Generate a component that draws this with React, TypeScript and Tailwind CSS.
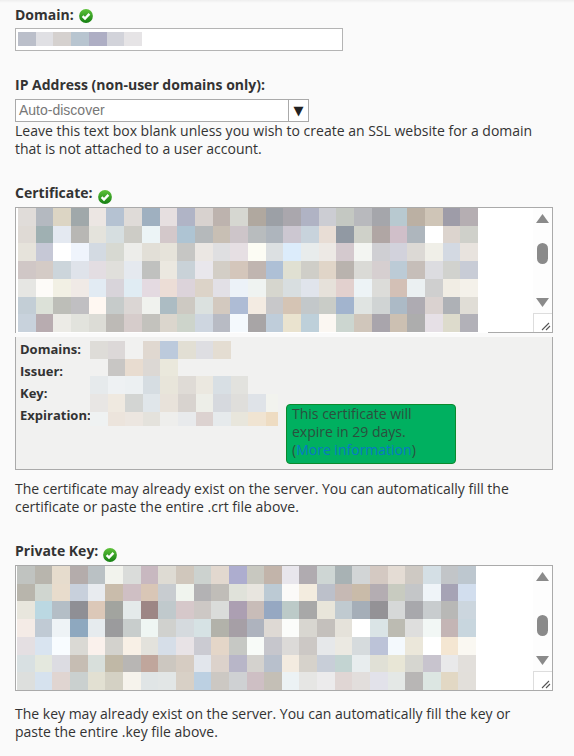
import React from 'react';

const domainCells = 'bbbfca e0e0e4 d5d1cf b8c5d0 aeaec4 d2d3da e6e4e6';

const certCells = `e0dcd9 b4b9c0 dcd5c4 a0a8aa ece6e3 b5c2d2 dfdbd8 9fb0c0 e6dfe0 b0b4c6 d8d2cf bdb3ae d6d7d1 b0a89f 9ca0a6 aaa7ad b0b3c4 cccdd3 c4c8c2 b8b9bd a5a6ab b8c9d0 bbb0a3 cfc5b7 9e9ca8 b5aeb2
dfdad5 9fb0b2 e4e9f1 b8b7b4 e4e3dc d6dee0 cdccc6 ecf4f6 d3c8ca aec4d3 b5b9bb c8bfb4 cdc5c9 b8bcbe aeb5bd ccc7d1 c8d3dc e8ddd5 9199a3 cfd1c9 b0a6a4 d0bfc9 aeb6bd ffffff dcd4ce cfd0ca
e6e3db c6c8d6 ffffff eff4fc d3dae2 d7d9d2 ededea e2dfd7 e6e3da c6c6c4 ebe7e3 dfdfe1 e6dfe3 fcfcf4 dce0e2 dcecfb e8ecec ede9e5 d4c9ce f3f5f2 cfcfd3 d2d2dc dcd9d5 f0efe8 d3d9e2 e8e3de
d0c7c6 d4cbc6 ccd5db dfe3ea e3dde2 e0dfdb e5e9ef c0c1bf ebe8e0 c9d2d8 e9e7ec d3cec6 d4c6bb c0b5b0 aec0d6 e0e0d2 cfcec8 e0d5c8 b9b3ae dadad6 d6cfd0 bccbd6 c6beb9 dcdce0 d1d2ce c8ccd6
e6e6e3 fdfbf8 f2f0e4 f0eae6 e2ebf3 d8d4da e0ecf3 e4dae1 ecddd6 dcd3da dcd3c8 e2e0e6 ecf2f8 eff3f1 d6d6ce d8dee0 e0e4ec e6e1da e2d0ce edf3f6 dcdcd9 d3c0b6 ebf0f2 cfcfcf f1ede4 f4f1ea
c3ced6 dce1d8 bdbeb8 c0bfc2 fff8f2 c6cbca dbd6d4 f0f2ee acbcc3 cdc9c2 dbe1df d3c9bf aebcd5 f3ebe2 c8c8ca d5c4b4 c3c8ca c9ccc7 a2b4ce e0e4e2 d0d4d4 acbac6 aeabb2 dad2d0 aeb1b6 e0ddd6
c8d2dc b8acb0 ecebe6 e2e3dd dcdcd6 bdbab6 d6cccb c3c2bd dbd6cd cdd4cb ced6e0 b8bbc4 f4f9fd a8a5a6 bfcdda eae3cf bed0da fbf7f2 ccd6d0 d0c6bb a9a5ac ccc0b2 adadad e6e0e6 dddbcc b2b1b8`;

const keyCells = `c0c3c0 b8b5ad e6dccd b4acab bac1c4 f2f3ed dadcda c8b8c0 dedbd3 d0c7bc ccd2cf e2d8cf adadcf c8c8c0 c2b4aa e8e6ec b0abb0 ced6d4 a8b2b4 d2d5d6 d4c9c2 e4dcd4 cec9c3 d4dfe5 c2c5c8 bdc7cf
b8b5ac d0d6d0 e8dccc c8d0dc e8ebef c9bcab cfbfc4 d9c6b6 c8ccd0 f0f4ee b3b2b4 c0bdb8 e0e2da e8e5df bccad4 fbfaf8 f3ecdf bcc0ca c6b9b4 c9bba9 b4adb2 c8cbc0 c4c6c8 eff4f8 a6a3b5 d2deee
e8e6dd bbd8e2 b4bec6 8f8f95 dcc8b8 a2a49f e4eaea 9d8685 c0c9cc d6c8ca cdc8c5 dadcda ac9fb2 c8bcb8 96a8c2 bccac8 a8a8a8 e8e5da c0cad0 a5aeb8 949296 d6d8d8 a8a8ac c8ccce b8b8b6 ccd6de
f4ebe6 c0cad4 eef3f6 8ea8bf e6ebee 9b9b9d c8cdcc eff6f3 d0d1ce d5dade d6e2e4 b2b2aa a69fa6 aeb3be ded9d4 fbfcfa d8d6d0 c4c0bc e5e2da ffffff dae4e6 bcbbb2 dededd f2f7f5 c4b5b5 c8d6de
e4dfe2 d9e4f0 f8fcff dad9d4 faf1ec d3d2cd f8f0e6 e3e2dc d6dee8 e8e3e6 cbcbd2 e4d6c8 c6c8c4 f8fbf8 c6c6cc dcdad8 ccc8c5 e6e8ea ebe9e2 d6dbdd bcc3d8 f4f9fd ebe7da ffffff f4e6d2 faf8f2
d8e0e2 e4e8de dcdce2 c6bdb3 d8dfdb c0b8a6 b8b6b4 c0a69c ccc7c0 d6ccc2 e2e6ec dcd2cb b8b6c8 d4d2ce b8c0cc f3ebe0 d6d2cb c8ced8 c3d4d2 e8edee e0e0d6 e8e6d6 d6d6d0 c8c4ce e9e9ea e2dfdb
dddfdd d6e2ee e0d5d1 cad0cf e2e0d2 d4d1c4 f6f3ec e0e5e6 e2e6e6 d8d0c6 bcd0e2 ccc8c3 cfd1d3 cebfc4 c4bfb6 ecf2f4 e6e6e4 ecebec e0d6d4 e2dedc e2e2ea e4e8e6 b8b6b5 dce6e2 e2d8c4 e2dfda`;

const infoCells = `dedcd8 dcd8d8 - e0d8d0 bccadc e2dfd4 dedee2 e4ddd2 - - -
- c8c6c4 e8dcd0 dcd8d4 eae8dc - - - - - -
e6eaec eef1f3 ecf0f2 d6dde2 e8e5da dfdbd6 ebe8e0 d8dfe4 e2e2de - -
e8e6e4 efe9e0 d3d5d3 e0e6ea e8e2da d8d3cf edeee8 d6d9de dfdedb dfe3e8 f2f3ee
eff2f2 ece4dc ece6e0 e4e2dc eeeeec e8eaec dcd2d0 e6eaec e8e6dc f0e4d2 eedcc2`;

const Cells = ({ data }: { data: string }) => (
  <>
    {data.split(/\s+/).map((c, i) => (
      <div key={i} style={{ backgroundColor: c === '-' ? 'transparent' : `#${c}` }} />
    ))}
  </>
);

const CheckIcon = ({ id, className }: { id: string; className: string }) => (
  <svg viewBox="0 0 14 14" className={`w-[14px] h-[14px] shrink-0 ${className}`}>
    <defs>
      <linearGradient id={id} x1="0" y1="0" x2="0" y2="1">
        <stop offset="0" stopColor="#5ec23a" />
        <stop offset="1" stopColor="#157f12" />
      </linearGradient>
    </defs>
    <circle cx="7" cy="7" r="6.9" fill={`url(#${id})`} />
    <path d="M3.6 7.2 L6 9.6 L10.4 4.9" fill="none" stroke="#fff" strokeWidth="2.4" />
  </svg>
);

const Label = ({ text, children }: { text: string; children?: React.ReactNode }) => (
  <div className="flex items-start h-[18px] font-bold text-[#333]">
    <span>{text}</span>
    {children}
  </div>
);

const Scrollbar = ({ thumbTop, downTop }: { thumbTop: string; downTop: string }) => (
  <div className="w-[19px] ml-auto flex flex-col items-center bg-[#fdfdfd]">
    <svg viewBox="0 0 13 9" className="w-[13px] h-[9px] mt-[6px] shrink-0">
      <path d="M6.5 0 L13 9 L0 9 Z" fill="#8a8a8a" />
    </svg>
    <div className={`w-[11px] h-[21px] rounded-full bg-[#8a8a8a] shrink-0 ${thumbTop}`} />
    <svg viewBox="0 0 13 9" className={`w-[13px] h-[9px] shrink-0 ${downTop}`}>
      <path d="M0 0 L13 0 L6.5 9 Z" fill="#8a8a8a" />
    </svg>
    <div className="mt-[6px] w-full h-[19px] border-l border-t border-[#ddd] bg-white flex items-end justify-end">
      <svg viewBox="0 0 10 10" className="w-[10px] h-[10px] mb-px mr-px">
        <path d="M1 9 L8 2 M5 9 L9 5" stroke="#555" strokeWidth="1.1" fill="none" />
      </svg>
    </div>
  </div>
);

const PastedBox = ({
  cells,
  widthClass,
  thumbTop,
  downTop,
  openBottom,
}: {
  cells: string;
  widthClass: string;
  thumbTop: string;
  downTop: string;
  openBottom?: boolean;
}) => (
  <div className="relative flex h-[126px] w-[538px] border border-[#aaa] bg-white">
    <div className={`grid grid-cols-[repeat(26,1fr)] grid-rows-[repeat(7,1fr)] h-[124px] ${widthClass}`}>
      <Cells data={cells} />
    </div>
    <Scrollbar thumbTop={thumbTop} downTop={downTop} />
    {openBottom && <div className="absolute left-0 bottom-[-1px] w-[472px] h-px bg-white" />}
  </div>
);

export default function App() {
  return (
    <div className="relative w-[574px] h-[756px] overflow-hidden bg-[#fafafa] px-[15px] pt-[6px] text-[14px] leading-[18px] text-[#333] font-['Open_Sans',sans-serif]">
      <div className="absolute inset-x-0 top-0 h-[3px] bg-gradient-to-b from-[#eeeeee] to-[#fafafa]" />

      <Label text="Domain:">
        <CheckIcon id="okDomain" className="ml-[5px] mt-[3px]" />
      </Label>
      <div className="mt-[4px] h-[23px] w-[328px] border border-[#b4b4b4] bg-white pl-[2px] pt-[3px]">
        <div className="grid grid-cols-7 w-[124px] h-[14px]">
          <Cells data={domainCells} />
        </div>
      </div>

      <div className="mt-[25px]">
        <Label text="IP Address (non-user domains only):" />
      </div>
      <div className="mt-[5px] flex h-[23px] w-[294px] border border-[#aaa] bg-white">
        <div className="flex-1 pl-[3px] text-[14px] leading-[21px] text-[#777] font-['Liberation_Sans',sans-serif]">
          Auto-discover
        </div>
        <div className="w-[20px] border-l border-[#aaa] flex items-center justify-center text-[13px] leading-none text-[#222] font-['DejaVu_Sans',sans-serif]">
          ▼
        </div>
      </div>
      <p>
        Leave this text box blank unless you wish to create an SSL website for a domain
        <br />
        that is not attached to a user account.
      </p>

      <div className="mt-[26px]">
        <Label text="Certificate:">
          <CheckIcon id="okCert" className="ml-[5px] mt-[6px]" />
        </Label>
      </div>
      <div className="mt-[5px]">
        <PastedBox
          cells={certCells}
          widthClass="w-[460px] ml-[2px]"
          thumbTop="mt-[20px]"
          downTop="mt-[34px]"
          openBottom
        />
      </div>

      <div className="mt-[4px] flex h-[133px] w-[538px] border-x border-b border-[#aaa] bg-[#f1f1f0]">
        <div className="w-[74px] pl-[4px] pt-px text-[13px] font-bold text-[#333]">
          <div className="h-[22px] leading-[22px]">Domains:</div>
          <div className="h-[22px] leading-[22px]">Issuer:</div>
          <div className="h-[22px] leading-[22px]">Key:</div>
          <div className="h-[22px] leading-[22px]">Expiration:</div>
        </div>
        <div className="mt-[4px] grid grid-cols-[repeat(10,17.6px)_12px] grid-rows-[repeat(4,17.7px)_14px] w-[188px] h-[85px]">
          <Cells data={infoCells} />
        </div>
        <div className="mt-[67px] ml-[8px] h-[60px] w-[170px] rounded-[4px] border border-[#0b8a2c] bg-[#00b060] px-[5px] text-[#2c4f3e]">
          This certificate will
          <br />
          expire in 29 days.
          <br />
          (<span className="text-[#0a78c4]">More information</span>)
        </div>
      </div>

      <p className="mt-[10px]">
        The certificate may already exist on the server. You can automatically fill the
        <br />
        certificate or paste the entire .crt file above.
      </p>

      <div className="mt-[26px]">
        <Label text="Private Key:">
          <CheckIcon id="okKey" className="ml-[5px] mt-[6px]" />
        </Label>
      </div>
      <div className="mt-[5px]">
        <PastedBox
          cells={keyCells}
          widthClass="w-[459px] ml-px"
          thumbTop="mt-[34px]"
          downTop="mt-[20px]"
        />
      </div>

      <p className="mt-[14px]">
        The key may already exist on the server. You can automatically fill the key or
        <br />
        paste the entire .key file above.
      </p>
    </div>
  );
}
